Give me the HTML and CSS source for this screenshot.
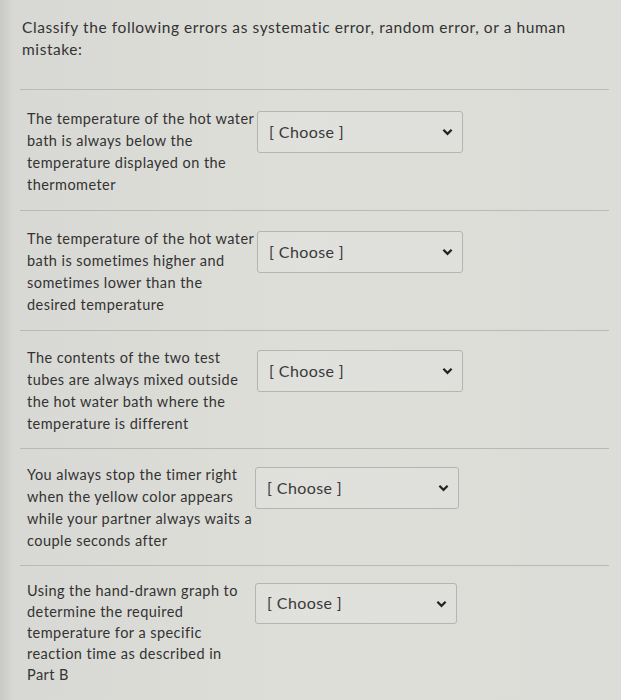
FILE: index.html
```html
<!DOCTYPE html>
<html>
<head>
<meta charset="utf-8">
<link rel="stylesheet" href="styles.css">
</head>
<body>
<div class="page">
  <p class="question">Classify the following errors as systematic error, random error, or a human<br>mistake:</p>
  <div class="rows">
    <div class="row r1">
      <div class="label">The temperature of the hot water<br>bath is always below the<br>temperature displayed on the<br>thermometer</div>
      <div class="select"><span>[ Choose ]</span><svg class="chev" viewBox="0 0 12 8" width="11" height="8"><path d="M1.5 1.5 L6 6 L10.5 1.5" fill="none" stroke="#222" stroke-width="2.4"/></svg></div>
    </div>
    <div class="row r2">
      <div class="label">The temperature of the hot water<br>bath is sometimes higher and<br>sometimes lower than the<br>desired temperature</div>
      <div class="select"><span>[ Choose ]</span><svg class="chev" viewBox="0 0 12 8" width="11" height="8"><path d="M1.5 1.5 L6 6 L10.5 1.5" fill="none" stroke="#222" stroke-width="2.4"/></svg></div>
    </div>
    <div class="row r3">
      <div class="label">The contents of the two test<br>tubes are always mixed outside<br>the hot water bath where the<br>temperature is different</div>
      <div class="select"><span>[ Choose ]</span><svg class="chev" viewBox="0 0 12 8" width="11" height="8"><path d="M1.5 1.5 L6 6 L10.5 1.5" fill="none" stroke="#222" stroke-width="2.4"/></svg></div>
    </div>
    <div class="row r4">
      <div class="label">You always stop the timer right<br>when the yellow color appears<br>while your partner always waits a<br>couple seconds after</div>
      <div class="select"><span>[ Choose ]</span><svg class="chev" viewBox="0 0 12 8" width="11" height="8"><path d="M1.5 1.5 L6 6 L10.5 1.5" fill="none" stroke="#222" stroke-width="2.4"/></svg></div>
    </div>
    <div class="row r5">
      <div class="label">Using the hand-drawn graph to<br>determine the required<br>temperature for a specific<br>reaction time as described in<br>Part B</div>
      <div class="select"><span>[ Choose ]</span><svg class="chev" viewBox="0 0 12 8" width="11" height="8"><path d="M1.5 1.5 L6 6 L10.5 1.5" fill="none" stroke="#222" stroke-width="2.4"/></svg></div>
    </div>
  </div>
</div>
</body>
</html>
```
FILE: styles.css
```css
html, body {
  margin: 0;
  padding: 0;
}
body {
  width: 621px;
  height: 700px;
  overflow: hidden;
  background: linear-gradient(90deg, #c9c9c6 0px, #d8d8d4 14px, #deded9 300px, #dcdcd8 621px);
  font-family: Lato, "Open Sans", sans-serif;
  color: #3a3a3a;
}
.page {
  padding: 16px 12px 0 22px;
}
.question {
  margin: 0;
  font-size: 15.5px;
  letter-spacing: 0.58px;
  line-height: 22px;
  white-space: nowrap;
  color: #333;
}
.rows {
  margin-top: 29px;
  margin-left: -2px;
}
.row {
  display: flex;
  align-items: flex-start;
  border-top: 1px solid #b9b9b5;
  padding: 17px 0 14px 7px;
  height: 87px;
}
.row.r1 { padding-top: 18px; height: 88px; }
.row.r2 { padding-top: 17px; height: 88px; }
.row.r3 { padding-top: 16px; height: 87px; }
.row.r4 { padding-top: 15px; height: 87px; }
.row.r5 { padding-top: 14px; height: auto; }
.row.r5 .label { line-height: 21px; }
.label {
  width: 230px;
  flex: none;
  font-size: 14.5px;
  letter-spacing: 0.45px;
  line-height: 22px;
  white-space: nowrap;
  color: #333;
}
.select {
  box-sizing: border-box;
  width: 206px;
  height: 42px;
  margin-top: 3px;
  border: 1px solid #b4b4b0;
  border-radius: 3px;
  display: flex;
  align-items: center;
  justify-content: space-between;
  padding: 0 9px 0 11px;
  font-size: 16px;
  letter-spacing: 0.4px;
  color: #3a3a3a;
  background: rgba(255,255,255,0.08);
}
.r5 .select { height: 41px; width: 202px; margin-left: -2px; }
.r4 .select { width: 204px; margin-left: -2px; }
.select span {
  margin-top: -2px;
}
.chev {
  display: block;
}
```
